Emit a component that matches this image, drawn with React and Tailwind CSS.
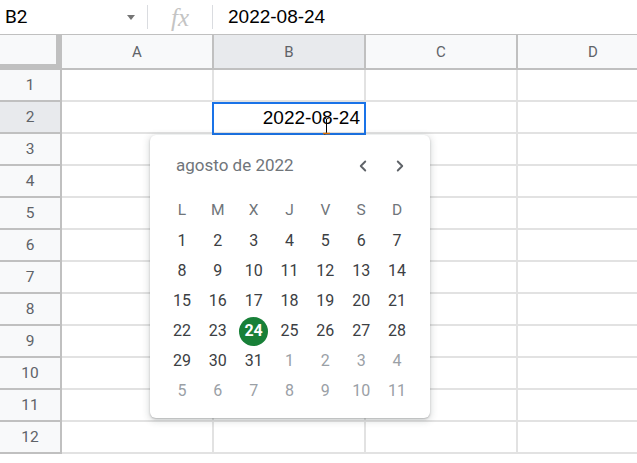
import React from "react";
import { ChevronLeft, ChevronRight } from "lucide-react";

const cols = ["A", "B", "C", "D"];
const rows = [1, 2, 3, 4, 5, 6, 7, 8, 9, 10, 11, 12];
const weekDays = ["L", "M", "X", "J", "V", "S", "D"];

// agosto 2022 starts on Monday, padded with septiembre
const days = [
  ...Array.from({ length: 31 }, (_, i) => ({ n: i + 1, cur: true })),
  ...Array.from({ length: 11 }, (_, i) => ({ n: i + 1, cur: false })),
];

function FormulaBar() {
  return (
    <div className="h-[35px] flex items-center border-b border-[#c0c0c0] bg-white">
      <div className="w-[147px] h-full flex items-center justify-between pl-[5px] pr-[12px]">
        <span className="text-[19px] text-black font-['Roboto',sans-serif]">B2</span>
        <svg width="8" height="5" viewBox="0 0 8 5">
          <path d="M0 0h8L4 5z" fill="#757575" />
        </svg>
      </div>
      <div className="w-px h-[24px] bg-[#dadce0]" />
      <div className="w-[64px] flex justify-center">
        <span className="italic text-[25px] leading-none text-[#c4c4c4] font-['Liberation_Serif',serif]">fx</span>
      </div>
      <div className="w-px h-[24px] bg-[#dadce0]" />
      <span className="ml-[15px] text-[19px] text-black font-['Liberation_Sans',Arial,sans-serif]">2022-08-24</span>
    </div>
  );
}

function Grid() {
  return (
    <div className="font-['Roboto',sans-serif]">
      <div className="flex h-[35px]">
        <div className="w-[62px] shrink-0 bg-[#f8f9fa] border-r-[6px] border-b-[6px] border-[#c0c0c0]" />
        {cols.map(c => (
          <div
            key={c}
            className={`w-[152px] shrink-0 flex items-center justify-center pt-[2px] border-r-2 border-b-2 border-[#c0c0c0] text-[15px] text-[#5f6368] ${c === "B" ? "bg-[#e8eaed]" : "bg-[#f8f9fa]"}`}
          >
            {c}
          </div>
        ))}
      </div>
      {rows.map(r => (
        <div key={r} className="flex h-[32px]">
          <div
            className={`w-[62px] shrink-0 flex items-center justify-center pt-[2px] border-r-2 border-b-2 border-[#c0c0c0] text-[15.5px] text-[#5f6368] ${r === 2 ? "bg-[#e8eaed]" : "bg-[#f8f9fa]"}`}
          >
            {r}
          </div>
          {cols.map(c => (
            <div key={c} className="w-[152px] shrink-0 flex items-center justify-end pt-[2px] pr-[4px] border-r-2 border-b-2 border-[#e2e2e2] bg-white">
              {r === 2 && c === "B" && (
                <span className="text-[19px] text-black font-['Liberation_Sans',Arial,sans-serif]">2022-08-24</span>
              )}
            </div>
          ))}
        </div>
      ))}
    </div>
  );
}

function DatePicker() {
  return (
    <div className="absolute left-[150px] top-[135px] w-[280px] h-[283px] bg-white rounded-md shadow-[0_1px_2px_rgba(60,64,67,0.3),0_2px_6px_2px_rgba(60,64,67,0.15)] font-['Roboto',sans-serif]">
      <div className="h-[61px] flex items-center pl-[26px] pr-[21px]">
        <span className="text-[17px] text-[#70757a]">agosto de 2022</span>
        <div className="ml-auto flex items-center gap-[19px] text-[#5f6368]">
          <ChevronLeft size={18} strokeWidth={2.5} />
          <ChevronRight size={18} strokeWidth={2.5} />
        </div>
      </div>
      <div className="ml-[14px] w-[251px] grid grid-cols-7">
        {weekDays.map(d => (
          <div key={d} className="h-[30px] flex items-center justify-center text-[15.5px] text-[#70757a]">
            {d}
          </div>
        ))}
        {days.map((d, i) => (
          <div key={i} className="h-[30px] flex items-center justify-center">
            {d.cur && d.n === 24 ? (
              <span className="w-[29px] h-[29px] rounded-full bg-[#188038] text-white font-bold text-[16px] flex items-center justify-center">
                24
              </span>
            ) : (
              <span className={`text-[16px] ${d.cur ? "text-[#3c4043]" : "text-[#9aa0a6]"}`}>{d.n}</span>
            )}
          </div>
        ))}
      </div>
    </div>
  );
}

export default function App() {
  return (
    <div className="relative w-[637px] h-[463px] overflow-hidden bg-white">
      <FormulaBar />
      <Grid />
      {/* selected cell */}
      <div className="absolute left-[212px] top-[102px] w-[154px] h-[33px] border-2 border-[#1a73e8] pointer-events-none" />
      {/* mouse I-beam */}
      <svg className="absolute left-[322px] top-[117px]" width="9" height="18" viewBox="0 0 9 18">
        <path d="M2 1c1.5 0 2.5 0.5 2.5 2v12c0 1.5-1 2-2.5 2M7 1c-1.5 0-2.5 0.5-2.5 2" stroke="#000" strokeWidth="1" fill="none" />
        <path d="M1 16.5h7" stroke="#e37400" strokeWidth="1.5" />
      </svg>
      <DatePicker />
    </div>
  );
}
